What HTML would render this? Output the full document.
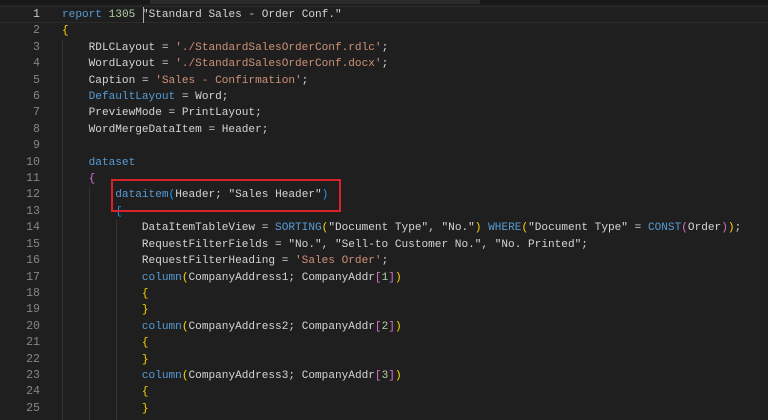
<!DOCTYPE html>
<html><head><meta charset="utf-8"><style>
html,body{margin:0;padding:0;}
body{width:768px;height:420px;background:#1f1f1f;overflow:hidden;position:relative;font-family:"Liberation Mono","DejaVu Sans Mono",monospace;font-size:11.1px;}
.top{position:absolute;left:0;top:0;width:768px;height:4px;background:#181818;}
.top2{position:absolute;left:150px;top:0;width:330px;height:4px;background:#2a2a2a;}
.cur{position:absolute;left:0;top:6px;width:768px;height:15px;border-top:1px solid #2c2c2c;border-bottom:1px solid #2c2c2c;}
.ln{position:absolute;left:0;width:40px;text-align:right;color:#858585;line-height:16.4px;font-size:11.6px;}
.code{position:absolute;left:62px;white-space:pre;color:#d4d4d4;line-height:16.4px;}
.k{color:#569cd6}.n{color:#b5cea8}.s{color:#ce9178}.g{color:#ffd700}.p{color:#da70d6}.b{color:#179fff}
.guide{position:absolute;width:1px;background:#343434;}
.box{position:absolute;left:111px;top:179px;width:226px;height:29px;border:2px solid #d9232a;}
.caret{position:absolute;left:143px;top:7px;width:1px;height:16px;background:#aeafad;}
</style></head><body>
<div class="top"></div><div class="top2"></div>
<div class="cur"></div>
<div class="guide" style="left:62px;top:40px;height:380px"></div>
<div class="guide" style="left:89px;top:187px;height:233px"></div>
<div class="guide" style="left:116px;top:220px;height:200px"></div>
<div class="ln" style="top:7px">
<span style="color:#c6c6c6">1</span><br>2<br>3<br>4<br>5<br>6<br>7<br>8<br>9<br>10<br>11<br>12<br>13<br>14<br>15<br>16<br>17<br>18<br>19<br>20<br>21<br>22<br>23<br>24<br>25</div>
<div class="code" style="top:7px"><span class="k">report</span> <span class="n">1305</span> "Standard Sales - Order Conf."
<span class="g">{</span>
    RDLCLayout = <span class="s">'./StandardSalesOrderConf.rdlc'</span>;
    WordLayout = <span class="s">'./StandardSalesOrderConf.docx'</span>;
    Caption = <span class="s">'Sales - Confirmation'</span>;
    <span class="k">DefaultLayout</span> = Word;
    PreviewMode = PrintLayout;
    WordMergeDataItem = Header;

    <span class="k">dataset</span>
    <span class="p">{</span>
        <span class="k">dataitem</span><span class="b">(</span>Header; "Sales Header"<span class="b">)</span>
        <span class="b">{</span>
            DataItemTableView = <span class="k">SORTING</span><span class="g">(</span>"Document Type", "No."<span class="g">)</span> <span class="k">WHERE</span><span class="g">(</span>"Document Type" = <span class="k">CONST</span><span class="p">(</span>Order<span class="p">)</span><span class="g">)</span>;
            RequestFilterFields = "No.", "Sell-to Customer No.", "No. Printed";
            RequestFilterHeading = <span class="s">'Sales Order'</span>;
            <span class="k">column</span><span class="g">(</span>CompanyAddress1; CompanyAddr<span class="p">[</span><span class="n">1</span><span class="p">]</span><span class="g">)</span>
            <span class="g">{</span>
            <span class="g">}</span>
            <span class="k">column</span><span class="g">(</span>CompanyAddress2; CompanyAddr<span class="p">[</span><span class="n">2</span><span class="p">]</span><span class="g">)</span>
            <span class="g">{</span>
            <span class="g">}</span>
            <span class="k">column</span><span class="g">(</span>CompanyAddress3; CompanyAddr<span class="p">[</span><span class="n">3</span><span class="p">]</span><span class="g">)</span>
            <span class="g">{</span>
            <span class="g">}</span></div>
<div class="caret"></div>
<div class="box"></div>
</body></html>
